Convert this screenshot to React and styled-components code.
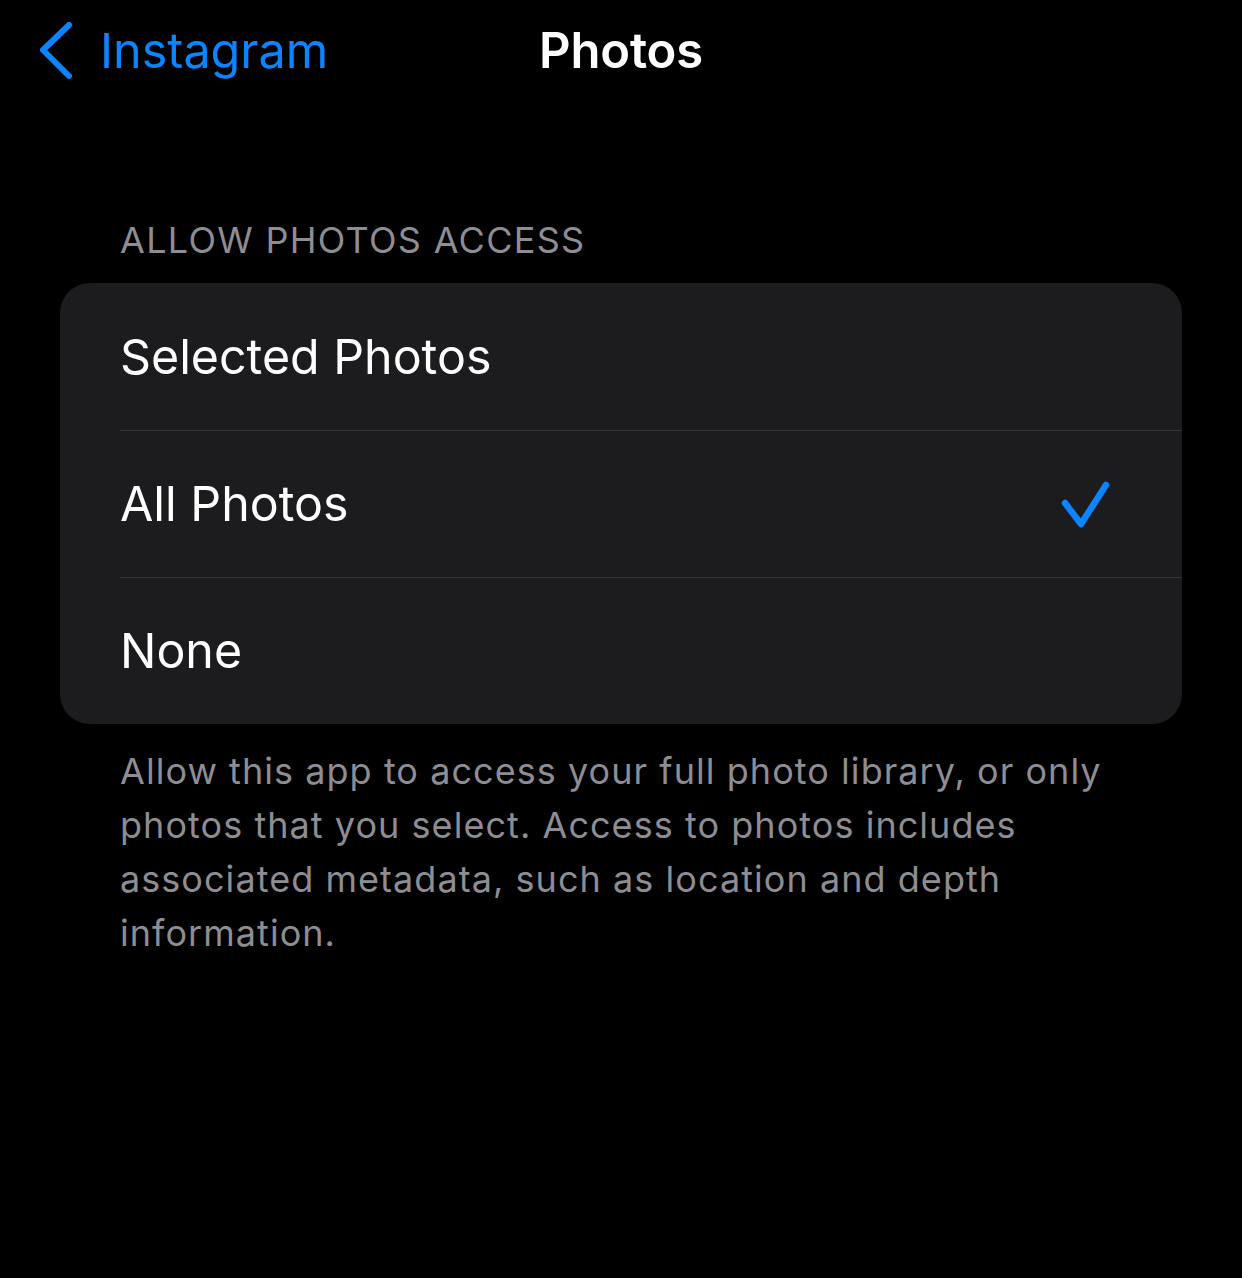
import styled, { createGlobalStyle } from 'styled-components';

const GlobalStyle = createGlobalStyle`
  html, body {
    margin: 0;
    padding: 0;
    background: #000;
  }
  body {
    font-family: 'Inter', 'Noto Sans', sans-serif;
    -webkit-font-smoothing: antialiased;
  }
`;

const options = [
  { id: 'selected', label: 'Selected Photos' },
  { id: 'all', label: 'All Photos' },
  { id: 'none', label: 'None' },
];

export default function App() {
  const current = 'all';
  return (
    <>
      <GlobalStyle />
      <Screen>
        <NavBar>
          <BackButton href="#">
            <svg width="36" height="60" viewBox="0 0 36 60">
              <path
                d="M31 5 L5 30 L31 56"
                fill="none"
                stroke="#0a84ff"
                strokeWidth="6"
                strokeLinecap="round"
                strokeLinejoin="round"
              />
            </svg>
            <span>Instagram</span>
          </BackButton>
          <Title>Photos</Title>
          <span />
        </NavBar>

        <Section>
          <SectionHeader>Allow Photos Access</SectionHeader>
          <Card>
            {options.map((o) => (
              <Row key={o.id}>
                <RowLabel>{o.label}</RowLabel>
                {o.id === current && (
                  <svg width="52" height="52" viewBox="0 0 52 52">
                    <path
                      d="M5 25 L21 46 L46 7"
                      fill="none"
                      stroke="#0a84ff"
                      strokeWidth="6.5"
                      strokeLinecap="round"
                      strokeLinejoin="round"
                    />
                  </svg>
                )}
              </Row>
            ))}
          </Card>
          <SectionFooter>
            Allow this app to access your full photo library, or only photos that you select. Access to
            photos includes associated metadata, such as location and depth information.
          </SectionFooter>
        </Section>
      </Screen>
    </>
  );
}

const Screen = styled.div`
  min-height: 1278px;
  background: #000;
  color: #fff;
`;

const NavBar = styled.header`
  height: 100px;
  display: grid;
  grid-template-columns: 1fr auto 1fr;
  align-items: center;
  padding: 0 38px;
`;

const BackButton = styled.a`
  display: flex;
  align-items: center;
  gap: 26px;
  color: #0a84ff;
  text-decoration: none;
  font-size: 48.5px;

  svg {
    flex-shrink: 0;
  }
`;

const Title = styled.h1`
  margin: 0;
  font-size: 49px;
  font-weight: 600;
  color: #fff;
  letter-spacing: -0.2px;
`;

const Section = styled.section`
  padding: 0 60px;
  margin-top: 118px;
`;

const SectionHeader = styled.div`
  padding: 0 60px;
  font-size: 36px;
  line-height: 44px;
  text-transform: uppercase;
  color: #8d8d93;
  letter-spacing: 1.3px;
`;

const Card = styled.div`
  margin-top: 21px;
  background: #1c1c1e;
  border-radius: 30px;
  overflow: hidden;
`;

const Row = styled.div`
  position: relative;
  height: 147px;
  display: flex;
  align-items: center;
  justify-content: space-between;
  padding: 0 70px 0 60px;

  & + &::before {
    content: '';
    position: absolute;
    top: 0;
    left: 60px;
    right: 0;
    height: 1px;
    background: #38383a;
  }
`;

const RowLabel = styled.span`
  font-size: 48.3px;
  color: #fff;
`;

const SectionFooter = styled.p`
  margin: 20px 0 0;
  padding: 0 60px;
  font-size: 36px;
  line-height: 54px;
  color: #8d8d93;
  letter-spacing: 1.05px;
`;
